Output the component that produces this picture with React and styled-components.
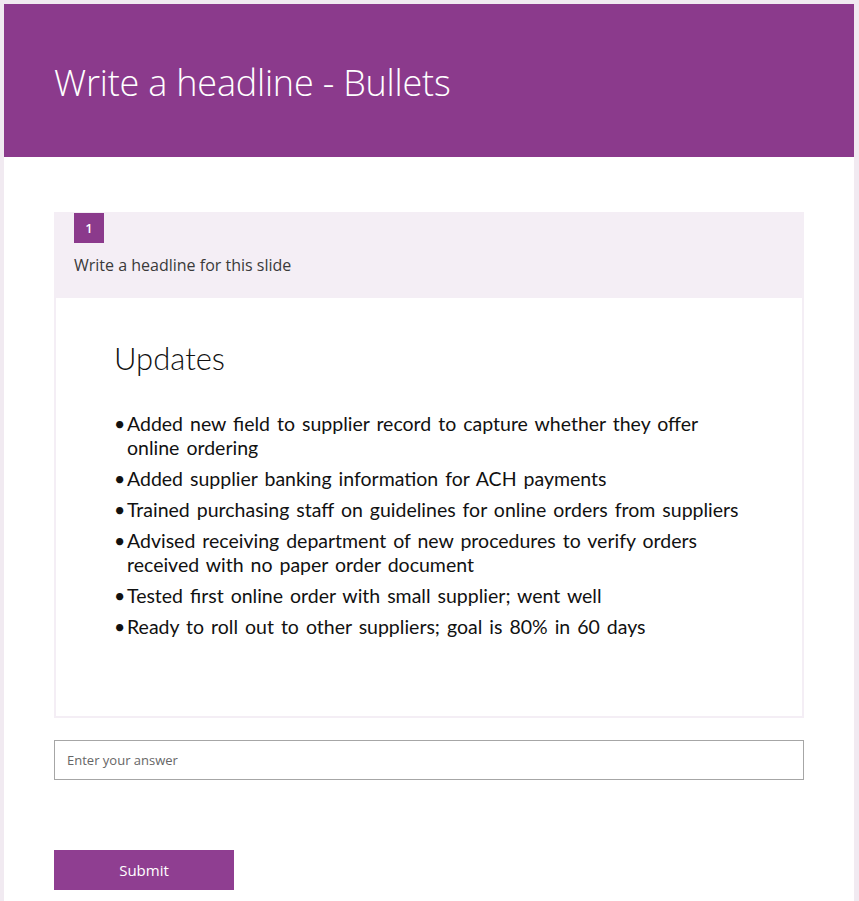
import styled, { createGlobalStyle } from 'styled-components';

const GlobalStyle = createGlobalStyle`
  html, body {
    margin: 0;
    padding: 0;
    background: #f1eaf1;
  }
  * {
    box-sizing: border-box;
  }
`

const Page = styled.div`
  padding: 4px 5px 0 4px;
  min-height: 901px;
  font-family: "Open Sans", "Noto Sans", sans-serif;
`

const Card = styled.div`
  background: #ffffff;
  min-height: 897px;
  display: flex;
  flex-direction: column;
`

const Banner = styled.header`
  height: 153px;
  background: #8b3a8c;
  padding: 0 50px;
  display: flex;
  align-items: flex-start;
`

const Title = styled.h1`
  margin: 56px 0 0;
  font-size: 36px;
  font-weight: 300;
  line-height: 46px;
  color: #ffffff;
  letter-spacing: -0.2px;
`

const Body = styled.main`
  padding: 55px 50px 0;
  display: flex;
  flex-direction: column;
`

const Question = styled.section`
  background: #f4eef5;
  display: flex;
  flex-direction: column;
  padding: 0 2px 2px;
`

const QuestionHead = styled.div`
  padding: 1px 18px 0;
  height: 86px;
`

const Badge = styled.div`
  width: 30px;
  height: 30px;
  background: #8b3a8c;
  color: #ffffff;
  font-size: 13px;
  font-weight: 600;
  display: flex;
  align-items: center;
  justify-content: center;
`

const Prompt = styled.div`
  margin-top: 11px;
  font-size: 16px;
  font-weight: 400;
  color: #3a3a3a;
`

const Slide = styled.div`
  background: #ffffff;
  height: 418px;
  padding: 40px 56px 0 58px;
  font-family: Lato, "Open Sans", sans-serif;
  color: #111111;
`

const SlideTitle = styled.h2`
  margin: 0;
  font-size: 31px;
  font-weight: 300;
  line-height: 40px;
`

const Bullets = styled.ul`
  margin: 34px 0 0;
  padding: 0;
  list-style: none;
  display: flex;
  flex-direction: column;
  gap: 7px;
`

const Bullet = styled.li`
  position: relative;
  padding-left: 13px;
  font-size: 19.5px;
  line-height: 24px;
  word-spacing: 2px;

  &::before {
    content: "•";
    position: absolute;
    left: 0;
    top: 0;
  }
`

const Answer = styled.input`
  margin-top: 22px;
  height: 40px;
  width: 100%;
  border: 1px solid #a6a6a6;
  padding: 0 12px;
  font-family: "Open Sans", sans-serif;
  font-size: 13px;
  color: #333333;
  outline: none;

  &::placeholder {
    color: #666666;
  }
`

const Submit = styled.button`
  margin-top: 70px;
  width: 180px;
  height: 40px;
  border: none;
  background: #8f3e91;
  color: #ffffff;
  font-family: "Open Sans", sans-serif;
  font-size: 15px;
  cursor: pointer;
`

const items = [
  'Added new field to supplier record to capture whether they offer online ordering',
  'Added supplier banking information for ACH payments',
  'Trained purchasing staff on guidelines for online orders from suppliers',
  'Advised receiving department of new procedures to verify orders received with no paper order document',
  'Tested first online order with small supplier; went well',
  'Ready to roll out to other suppliers; goal is 80% in 60 days',
]

export default function App() {
  return (
    <Page>
      <GlobalStyle />
      <Card>
        <Banner>
          <Title>Write a headline - Bullets</Title>
        </Banner>
        <Body>
          <Question>
            <QuestionHead>
              <Badge>1</Badge>
              <Prompt>Write a headline for this slide</Prompt>
            </QuestionHead>
            <Slide>
              <SlideTitle>Updates</SlideTitle>
              <Bullets>
                {items.map((t) => (
                  <Bullet key={t}>{t}</Bullet>
                ))}
              </Bullets>
            </Slide>
          </Question>
          <Answer placeholder="Enter your answer" />
          <div>
            <Submit>Submit</Submit>
          </div>
        </Body>
      </Card>
    </Page>
  )
}
